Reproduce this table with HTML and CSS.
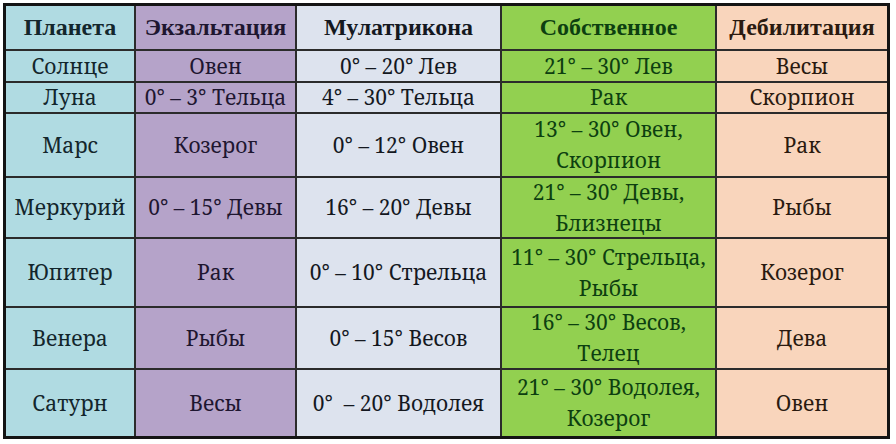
FILE: index.html
```html
<!DOCTYPE html>
<html lang="ru">
<head>
<meta charset="utf-8">
<link rel="stylesheet" href="styles.css">
</head>
<body>
<div class="table">
  <div class="c c1 h">Планета</div>
  <div class="c c2 h">Экзальтация</div>
  <div class="c c3 h">Мулатрикона</div>
  <div class="c c4 h">Собственное</div>
  <div class="c c5 h">Дебилитация</div>

  <div class="c c1">Солнце</div>
  <div class="c c2">Овен</div>
  <div class="c c3">0° – 20° Лев</div>
  <div class="c c4">21° – 30° Лев</div>
  <div class="c c5">Весы</div>

  <div class="c c1">Луна</div>
  <div class="c c2">0° – 3° Тельца</div>
  <div class="c c3">4° – 30° Тельца</div>
  <div class="c c4">Рак</div>
  <div class="c c5">Скорпион</div>

  <div class="c c1">Марс</div>
  <div class="c c2">Козерог</div>
  <div class="c c3">0° – 12° Овен</div>
  <div class="c c4">13° – 30° Овен,<br>Скорпион</div>
  <div class="c c5">Рак</div>

  <div class="c c1">Меркурий</div>
  <div class="c c2">0° – 15° Девы</div>
  <div class="c c3">16° – 20° Девы</div>
  <div class="c c4">21° – 30° Девы,<br>Близнецы</div>
  <div class="c c5">Рыбы</div>

  <div class="c c1">Юпитер</div>
  <div class="c c2">Рак</div>
  <div class="c c3">0° – 10° Стрельца</div>
  <div class="c c4">11° – 30° Стрельца,<br>Рыбы</div>
  <div class="c c5">Козерог</div>

  <div class="c c1">Венера</div>
  <div class="c c2">Рыбы</div>
  <div class="c c3">0° – 15° Весов</div>
  <div class="c c4">16° – 30° Весов,<br>Телец</div>
  <div class="c c5">Дева</div>

  <div class="c c1">Сатурн</div>
  <div class="c c2">Весы</div>
  <div class="c c3">0°&nbsp; – 20° Водолея</div>
  <div class="c c4">21° – 30° Водолея,<br>Козерог</div>
  <div class="c c5">Овен</div>
</div>
</body>
</html>
```

FILE: styles.css
```css
html, body {
  margin: 0;
  padding: 0;
  background: #ffffff;
}
body {
  padding: 3px 0 0 3px;
  font-family: "Noto Serif", "Liberation Serif", serif;
}
.table {
  display: grid;
  width: 887px;
  box-sizing: border-box;
  grid-template-columns: 128px 159px 203px 213px 170px;
  grid-template-rows: 43px 30px 29px 62px 59px 67px 60px 66px;
  gap: 2px;
  border: 3px solid #141414;
  background: #2b2b2b;
}
.c {
  display: flex;
  flex-direction: column;
  align-items: center;
  justify-content: center;
  text-align: center;
  font-family: "Noto Serif", "Liberation Serif", serif;
  font-size: 21px;
  line-height: 31px;
  white-space: nowrap;
}
.h {
  font-family: "Liberation Serif", serif;
  font-weight: bold;
  font-size: 24px;
}
.c1 { background: #b0dbe2; color: #13262c; }
.c2 { background: #b5a3c9; color: #1e1630; }
.c3 { background: #dde3ee; color: #14181f; }
.c4 { background: #92d050; color: #0d3f10; }
.c5 { background: #f9d5bc; color: #2a1a10; }
```
